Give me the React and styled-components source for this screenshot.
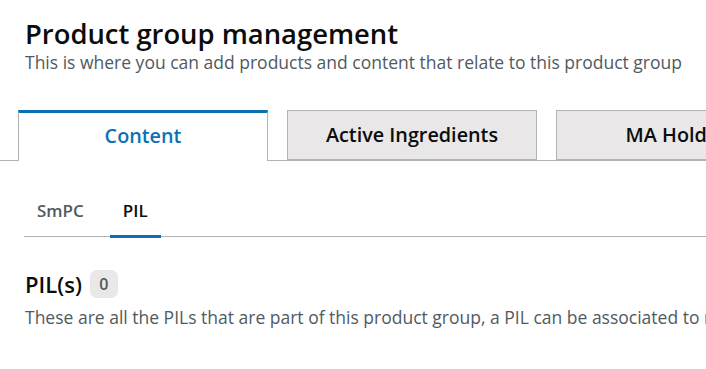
import React from "react";
import styled, { createGlobalStyle } from "styled-components";

const GlobalStyle = createGlobalStyle`
    html, body {
        margin: 0;
        padding: 0;
        background: #fff;
        overflow: hidden;
    }
    body {
        font-family: "Open Sans", "Noto Sans", sans-serif;
        color: #0b0c0c;
    }
`;

const Page = styled.div`
    width: 706px;
    padding-top: 17px;
`;

const Header = styled.header`
    padding: 0 25px;
`;

const Title = styled.h1`
    margin: 0;
    font-size: 27.4px;
    font-weight: 600;
    line-height: 34px;
    color: #0b0c0c;
    white-space: nowrap;
`;

const Lead = styled.p`
    margin: 0;
    font-size: 17.5px;
    line-height: 23px;
    color: #505a5f;
    white-space: nowrap;
`;

const TabBar = styled.nav`
    display: flex;
    gap: 19px;
    margin-top: 36px;
    padding-left: 18px;
    border-bottom: 1px solid #b1b4b6;
    height: 50px;
`;

const Tab = styled.button`
    flex: 0 0 250px;
    height: ${({ active }) => (active ? "51px" : "50px")};
    box-sizing: border-box;
    margin: 0;
    padding: 0 0 ${({ active }) => (active ? "4px" : "1px")};
    font-family: inherit;
    font-size: 19.8px;
    font-weight: 600;
    color: ${({ active }) => (active ? "#0b71b4" : "#0b0c0c")};
    background: ${({ active }) => (active ? "#fff" : "#e9e7e7")};
    border: 1px solid #b1b4b6;
    border-top: ${({ active }) => (active ? "3px solid #0b71b4" : "1px solid #b1b4b6")};
    border-bottom: ${({ active }) => (active ? "none" : "1px solid #b1b4b6")};
    cursor: pointer;
    white-space: nowrap;
`;

const Body = styled.section`
    padding: 0 0 0 24px;
`;

const SubTabs = styled.div`
    display: flex;
    gap: 13px;
    margin-top: 37px;
    border-bottom: 1px solid #b1b4b6;
    width: 700px;
`;

const SubTab = styled.div`
    padding: 0 13px 11px;
    font-size: 17px;
    font-weight: 600;
    line-height: 26px;
    color: ${({ active }) => (active ? "#0b0c0c" : "#505a5f")};
    border-bottom: 3px solid ${({ active }) => (active ? "#0b71b4" : "transparent")};
    margin-bottom: -2px;
    cursor: pointer;
`;

const SectionHead = styled.div`
    display: flex;
    align-items: center;
    gap: 8px;
    margin-top: 32px;
    padding-left: 1px;
`;

const SectionTitle = styled.h2`
    margin: 0;
    font-size: 22px;
    font-weight: 600;
    line-height: 30px;
    color: #0b0c0c;
`;

const Count = styled.span`
    display: inline-flex;
    align-items: center;
    justify-content: center;
    width: 28px;
    height: 28px;
    border-radius: 7px;
    background: #e9e7e7;
    font-size: 16px;
    font-weight: 600;
    color: #505a5f;
`;

const Description = styled.p`
    margin: 6px 0 0 1px;
    font-size: 17.5px;
    line-height: 24px;
    color: #505a5f;
    white-space: nowrap;
`;

const tabs = ["Content", "Active Ingredients", "MA Holders"];
const subTabs = ["SmPC", "PIL"];

export default function App() {
    return (
        <Page>
            <GlobalStyle />
            <Header>
                <Title>Product group management</Title>
                <Lead>This is where you can add products and content that relate to this product group</Lead>
            </Header>
            <TabBar>
                {tabs.map((t, i) => (
                    <Tab key={t} active={i === 0}>{t}</Tab>
                ))}
            </TabBar>
            <Body>
                <SubTabs>
                    {subTabs.map(t => (
                        <SubTab key={t} active={t === "PIL"}>{t}</SubTab>
                    ))}
                </SubTabs>
                <SectionHead>
                    <SectionTitle>PIL(s)</SectionTitle>
                    <Count>0</Count>
                </SectionHead>
                <Description>
                    These are all the PILs that are part of this product group, a PIL can be associated to more than one product
                </Description>
            </Body>
        </Page>
    );
}
